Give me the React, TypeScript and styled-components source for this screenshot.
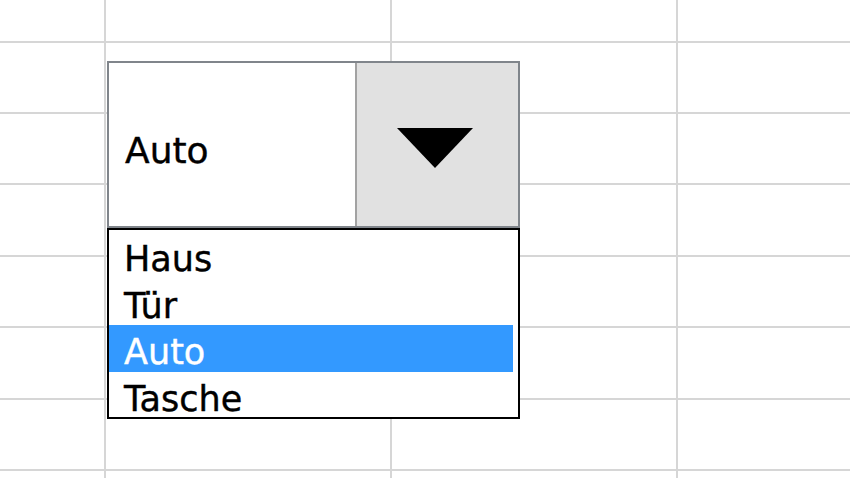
import React from "react";
import styled, { createGlobalStyle } from "styled-components";

const items = ["Haus", "Tür", "Auto", "Tasche"];
const selected = "Auto";

// the sheet runs past the window so the outer cells show no closing line
const COLS = ["106px", "286px", "286px", "286px"];
const ROWS = ["42.7px", "71.4px", "71.4px", "71.4px", "71.4px", "71.4px", "71.4px", "71.4px"];

function App() {
  const cells = [];
  for (let r = 0; r < ROWS.length; r++) {
    for (let c = 0; c < COLS.length; c++) {
      cells.push(<Cell key={`${r}-${c}`} />);
    }
  }

  return (
    <>
      <GlobalStyle />
      <Sheet>
        <Grid>{cells}</Grid>
        <ComboWrapper>
          <Combo>
            <Field>{selected}</Field>
            <DropButton>
              <svg width="76" height="40" viewBox="0 0 76 40">
                <polygon points="0,0 76,0 38,40" fill="#000" />
              </svg>
            </DropButton>
          </Combo>
          <List>
            {items.map((item) => (
              <Item key={item} active={item === selected}>
                {item}
              </Item>
            ))}
          </List>
        </ComboWrapper>
      </Sheet>
    </>
  );
}

const GlobalStyle = createGlobalStyle`
  html, body {
    margin: 0;
    padding: 0;
    background: #ffffff;
    overflow: hidden;
  }
`;

const Sheet = styled.div`
  position: relative;
  width: 850px;
  height: 478px;
  overflow: hidden;
  font-family: "DejaVu Sans", "Noto Sans", sans-serif;
`;

const Grid = styled.div`
  display: grid;
  grid-template-columns: ${COLS.join(" ")};
  grid-template-rows: ${ROWS.join(" ")};
  width: max-content;
`;

const Cell = styled.div`
  box-sizing: border-box;
  border-right: 2px solid #d6d6d6;
  border-bottom: 2px solid #d6d6d6;
`;

const ComboWrapper = styled.div`
  position: absolute;
  left: 107px;
  top: 61px;
  width: 413px;
  display: flex;
  flex-direction: column;
`;

const Combo = styled.div`
  box-sizing: border-box;
  height: 167px;
  display: flex;
  border: 2px solid #80858b;
  background: #ffffff;
`;

const Field = styled.div`
  flex: 1;
  padding: 12px 0 0 16px;
  font-size: 36px;
  line-height: 151px;
  color: #000;
  -webkit-text-stroke: 0.4px #000;
`;

const DropButton = styled.div`
  box-sizing: border-box;
  width: 163px;
  display: flex;
  align-items: center;
  justify-content: center;
  padding: 7px 5px 0 0;
  background: #e1e1e1;
  border-left: 2px solid #a2a2a2;
`;

const List = styled.div`
  box-sizing: border-box;
  height: 191px;
  padding: 2px 5px 0 0;
  border: 2px solid #000;
  background: #ffffff;
`;

const Item = styled.div<{ active: boolean }>`
  box-sizing: border-box;
  height: 46.5px;
  padding: 4px 0 0 15px;
  font-size: 35px;
  line-height: 46.5px;
  white-space: nowrap;
  color: ${(p) => (p.active ? "#ffffff" : "#000000")};
  -webkit-text-stroke: 0.4px ${(p) => (p.active ? "#ffffff" : "#000000")};
  background: ${(p) => (p.active ? "#3399ff" : "transparent")};
`;

export default App;
